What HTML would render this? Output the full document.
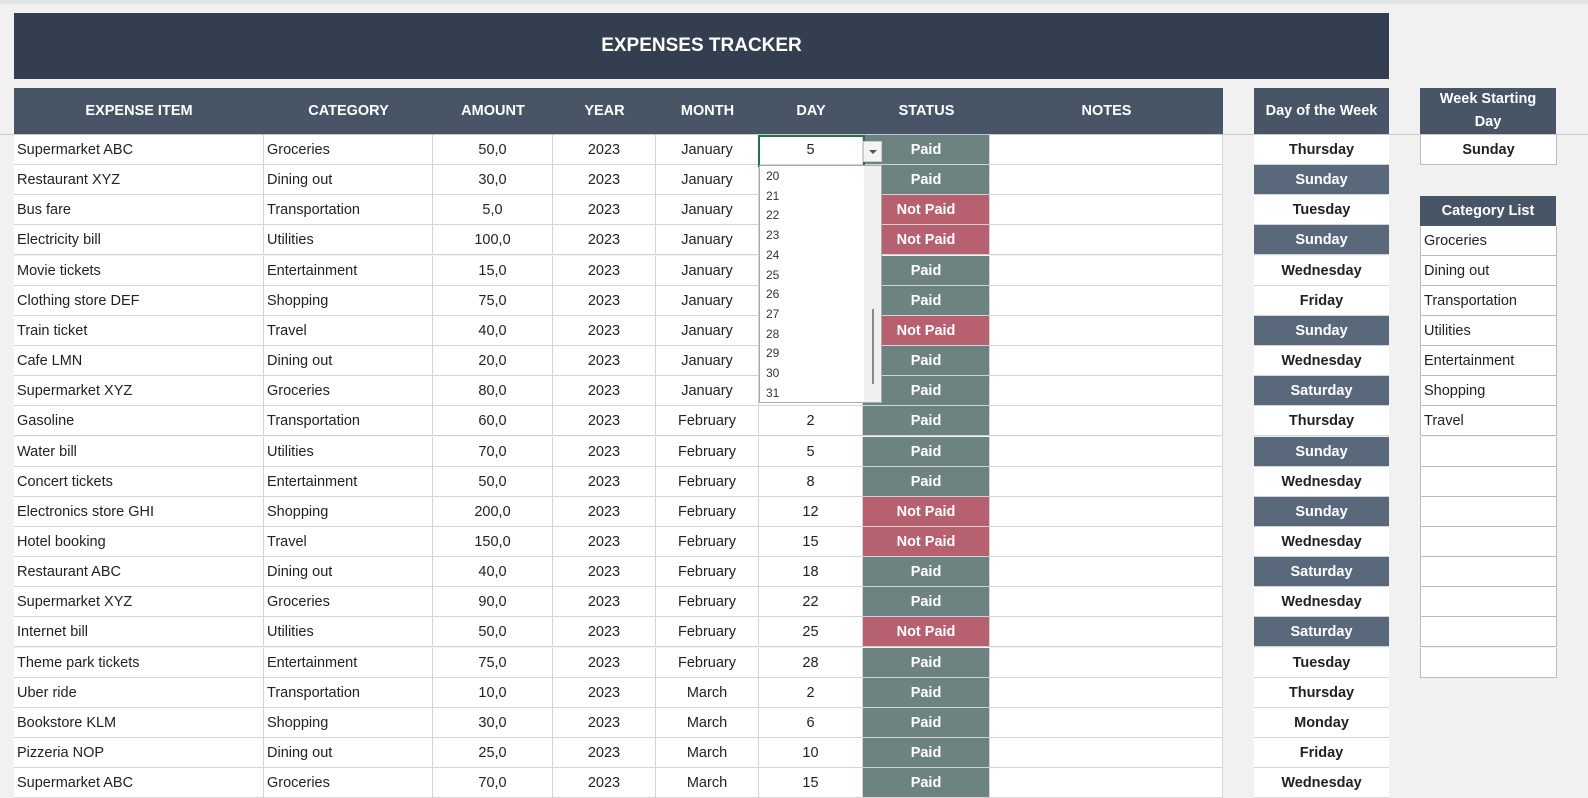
<!DOCTYPE html>
<html><head><meta charset="utf-8"><style>
body{margin:0;width:1588px;height:794px;background:#f1f1f1;position:relative;overflow:hidden;font-family:"Liberation Sans",sans-serif;}
.top{position:absolute;left:0;top:0;width:1588px;height:4px;background:#dfe6e3}
.hl{position:absolute;left:0;top:134px;width:1588px;height:1px;background:#c8c8c8}
.title{position:absolute;left:14px;top:13px;width:1375px;height:66px;background:#333f50;color:#fff;font-weight:bold;font-size:19px;text-align:center;line-height:66px}
.hdr{position:absolute;top:88px;height:46px;background:#485567;color:#fff;font-weight:bold;font-size:14.5px;display:flex}
.hdr span{display:block;text-align:center;line-height:46px}
.r{position:absolute;left:14px;height:30px;width:1209px;display:flex;background:#fff;font-size:14.5px;color:#222}
.r span{display:block;height:29px;line-height:30px;border-right:1px solid #d4d4d4;border-bottom:1px solid #d4d4d4;box-sizing:content-box;text-align:center;white-space:nowrap;overflow:hidden}
.r span.l{text-align:left;padding-left:3px}
.c1{width:246px}.c2{width:165px}.c3{width:119px}.c4{width:102px}.c5{width:102px}.c6{width:103px}.c7{width:126px}.c8{width:232px}
.p{background:#6d8381;color:#fff;font-weight:bold}.n{background:#b7606f;color:#fff;font-weight:bold}
.d{position:absolute;left:1254px;width:135px;height:29px;line-height:30px;text-align:center;font-weight:bold;font-size:14.5px;background:#fff;color:#222;border-bottom:1px solid #d4d4d4}
.d.k{background:#5a687b;color:#fff}
.cat{position:absolute;left:1420px;width:132px;padding-left:3px;height:29px;line-height:30px;font-size:14.5px;background:#fff;color:#222;border:1px solid #bbb;border-top:none}
</style></head><body>
<div class="top"></div>
<div class="title">EXPENSES TRACKER</div>
<div class="hl"></div>
<div class="hdr" style="left:14px;width:1209px">
<span style="width:250px">EXPENSE ITEM</span><span style="width:169px">CATEGORY</span><span style="width:120px">AMOUNT</span><span style="width:103px">YEAR</span><span style="width:103px">MONTH</span><span style="width:104px">DAY</span><span style="width:127px">STATUS</span><span style="width:233px">NOTES</span></div>
<div class="hdr" style="left:1254px;width:135px"><span style="width:135px">Day of the Week</span></div>
<div class="hdr" style="left:1420px;width:136px"><span style="width:136px;line-height:23px">Week Starting<br>Day</span></div>
<div class="cat" style="top:135px;text-align:center;font-weight:bold;padding:0;width:135px">Sunday</div>
<div class="hdr" style="left:1420px;width:136px;top:196px;height:30px"><span style="width:136px;line-height:30px">Category List</span></div>
<div class="cat" style="top:226px">Groceries</div>
<div class="cat" style="top:256px">Dining out</div>
<div class="cat" style="top:286px">Transportation</div>
<div class="cat" style="top:316px">Utilities</div>
<div class="cat" style="top:346px">Entertainment</div>
<div class="cat" style="top:376px">Shopping</div>
<div class="cat" style="top:406px">Travel</div>
<div class="cat" style="top:437px"></div>
<div class="cat" style="top:467px"></div>
<div class="cat" style="top:497px"></div>
<div class="cat" style="top:527px"></div>
<div class="cat" style="top:557px"></div>
<div class="cat" style="top:587px"></div>
<div class="cat" style="top:617px"></div>
<div class="cat" style="top:648px"></div>

<div class="r" style="top:135px"><span class="c1 l">Supermarket ABC</span><span class="c2 l">Groceries</span><span class="c3">50,0</span><span class="c4">2023</span><span class="c5">January</span><span class="c6">5</span><span class="c7 p">Paid</span><span class="c8"></span></div>
<div class="r" style="top:165px"><span class="c1 l">Restaurant XYZ</span><span class="c2 l">Dining out</span><span class="c3">30,0</span><span class="c4">2023</span><span class="c5">January</span><span class="c6"></span><span class="c7 p">Paid</span><span class="c8"></span></div>
<div class="r" style="top:195px"><span class="c1 l">Bus fare</span><span class="c2 l">Transportation</span><span class="c3">5,0</span><span class="c4">2023</span><span class="c5">January</span><span class="c6"></span><span class="c7 n">Not Paid</span><span class="c8"></span></div>
<div class="r" style="top:225px"><span class="c1 l">Electricity bill</span><span class="c2 l">Utilities</span><span class="c3">100,0</span><span class="c4">2023</span><span class="c5">January</span><span class="c6"></span><span class="c7 n">Not Paid</span><span class="c8"></span></div>
<div class="r" style="top:256px"><span class="c1 l">Movie tickets</span><span class="c2 l">Entertainment</span><span class="c3">15,0</span><span class="c4">2023</span><span class="c5">January</span><span class="c6"></span><span class="c7 p">Paid</span><span class="c8"></span></div>
<div class="r" style="top:286px"><span class="c1 l">Clothing store DEF</span><span class="c2 l">Shopping</span><span class="c3">75,0</span><span class="c4">2023</span><span class="c5">January</span><span class="c6"></span><span class="c7 p">Paid</span><span class="c8"></span></div>
<div class="r" style="top:316px"><span class="c1 l">Train ticket</span><span class="c2 l">Travel</span><span class="c3">40,0</span><span class="c4">2023</span><span class="c5">January</span><span class="c6"></span><span class="c7 n">Not Paid</span><span class="c8"></span></div>
<div class="r" style="top:346px"><span class="c1 l">Cafe LMN</span><span class="c2 l">Dining out</span><span class="c3">20,0</span><span class="c4">2023</span><span class="c5">January</span><span class="c6"></span><span class="c7 p">Paid</span><span class="c8"></span></div>
<div class="r" style="top:376px"><span class="c1 l">Supermarket XYZ</span><span class="c2 l">Groceries</span><span class="c3">80,0</span><span class="c4">2023</span><span class="c5">January</span><span class="c6"></span><span class="c7 p">Paid</span><span class="c8"></span></div>
<div class="r" style="top:406px"><span class="c1 l">Gasoline</span><span class="c2 l">Transportation</span><span class="c3">60,0</span><span class="c4">2023</span><span class="c5">February</span><span class="c6">2</span><span class="c7 p">Paid</span><span class="c8"></span></div>
<div class="r" style="top:437px"><span class="c1 l">Water bill</span><span class="c2 l">Utilities</span><span class="c3">70,0</span><span class="c4">2023</span><span class="c5">February</span><span class="c6">5</span><span class="c7 p">Paid</span><span class="c8"></span></div>
<div class="r" style="top:467px"><span class="c1 l">Concert tickets</span><span class="c2 l">Entertainment</span><span class="c3">50,0</span><span class="c4">2023</span><span class="c5">February</span><span class="c6">8</span><span class="c7 p">Paid</span><span class="c8"></span></div>
<div class="r" style="top:497px"><span class="c1 l">Electronics store GHI</span><span class="c2 l">Shopping</span><span class="c3">200,0</span><span class="c4">2023</span><span class="c5">February</span><span class="c6">12</span><span class="c7 n">Not Paid</span><span class="c8"></span></div>
<div class="r" style="top:527px"><span class="c1 l">Hotel booking</span><span class="c2 l">Travel</span><span class="c3">150,0</span><span class="c4">2023</span><span class="c5">February</span><span class="c6">15</span><span class="c7 n">Not Paid</span><span class="c8"></span></div>
<div class="r" style="top:557px"><span class="c1 l">Restaurant ABC</span><span class="c2 l">Dining out</span><span class="c3">40,0</span><span class="c4">2023</span><span class="c5">February</span><span class="c6">18</span><span class="c7 p">Paid</span><span class="c8"></span></div>
<div class="r" style="top:587px"><span class="c1 l">Supermarket XYZ</span><span class="c2 l">Groceries</span><span class="c3">90,0</span><span class="c4">2023</span><span class="c5">February</span><span class="c6">22</span><span class="c7 p">Paid</span><span class="c8"></span></div>
<div class="r" style="top:617px"><span class="c1 l">Internet bill</span><span class="c2 l">Utilities</span><span class="c3">50,0</span><span class="c4">2023</span><span class="c5">February</span><span class="c6">25</span><span class="c7 n">Not Paid</span><span class="c8"></span></div>
<div class="r" style="top:648px"><span class="c1 l">Theme park tickets</span><span class="c2 l">Entertainment</span><span class="c3">75,0</span><span class="c4">2023</span><span class="c5">February</span><span class="c6">28</span><span class="c7 p">Paid</span><span class="c8"></span></div>
<div class="r" style="top:678px"><span class="c1 l">Uber ride</span><span class="c2 l">Transportation</span><span class="c3">10,0</span><span class="c4">2023</span><span class="c5">March</span><span class="c6">2</span><span class="c7 p">Paid</span><span class="c8"></span></div>
<div class="r" style="top:708px"><span class="c1 l">Bookstore KLM</span><span class="c2 l">Shopping</span><span class="c3">30,0</span><span class="c4">2023</span><span class="c5">March</span><span class="c6">6</span><span class="c7 p">Paid</span><span class="c8"></span></div>
<div class="r" style="top:738px"><span class="c1 l">Pizzeria NOP</span><span class="c2 l">Dining out</span><span class="c3">25,0</span><span class="c4">2023</span><span class="c5">March</span><span class="c6">10</span><span class="c7 p">Paid</span><span class="c8"></span></div>
<div class="r" style="top:768px"><span class="c1 l">Supermarket ABC</span><span class="c2 l">Groceries</span><span class="c3">70,0</span><span class="c4">2023</span><span class="c5">March</span><span class="c6">15</span><span class="c7 p">Paid</span><span class="c8"></span></div>

<div class="d" style="top:135px">Thursday</div>
<div class="d k" style="top:165px">Sunday</div>
<div class="d" style="top:195px">Tuesday</div>
<div class="d k" style="top:225px">Sunday</div>
<div class="d" style="top:256px">Wednesday</div>
<div class="d" style="top:286px">Friday</div>
<div class="d k" style="top:316px">Sunday</div>
<div class="d" style="top:346px">Wednesday</div>
<div class="d k" style="top:376px">Saturday</div>
<div class="d" style="top:406px">Thursday</div>
<div class="d k" style="top:437px">Sunday</div>
<div class="d" style="top:467px">Wednesday</div>
<div class="d k" style="top:497px">Sunday</div>
<div class="d" style="top:527px">Wednesday</div>
<div class="d k" style="top:557px">Saturday</div>
<div class="d" style="top:587px">Wednesday</div>
<div class="d k" style="top:617px">Saturday</div>
<div class="d" style="top:648px">Tuesday</div>
<div class="d" style="top:678px">Thursday</div>
<div class="d" style="top:708px">Monday</div>
<div class="d" style="top:738px">Friday</div>
<div class="d" style="top:768px">Wednesday</div>

<div style="position:absolute;left:758px;top:135px;width:103px;height:28px;border:2px solid #217346"></div>
<div style="position:absolute;left:863px;top:141px;width:19px;height:21px;background:#f4f4f4;border:1px solid #ccc;box-sizing:border-box"><div style="margin:8px auto 0;width:0;height:0;border-left:4px solid transparent;border-right:4px solid transparent;border-top:4px solid #555"></div></div>
<div style="position:absolute;left:759px;top:165px;width:123px;height:238px;background:#fff;border:1px solid #aaa;box-sizing:border-box;font-size:12px;color:#333;line-height:19.7px;padding:1px 0 0 6px">
20<br>21<br>22<br>23<br>24<br>25<br>26<br>27<br>28<br>29<br>30<br>31
<div style="position:absolute;right:0;top:0;width:17px;height:236px;background:#f0f0f0"></div>
<div style="position:absolute;right:7px;top:143px;width:2px;height:75px;background:#888"></div>
</div>
</body></html>
